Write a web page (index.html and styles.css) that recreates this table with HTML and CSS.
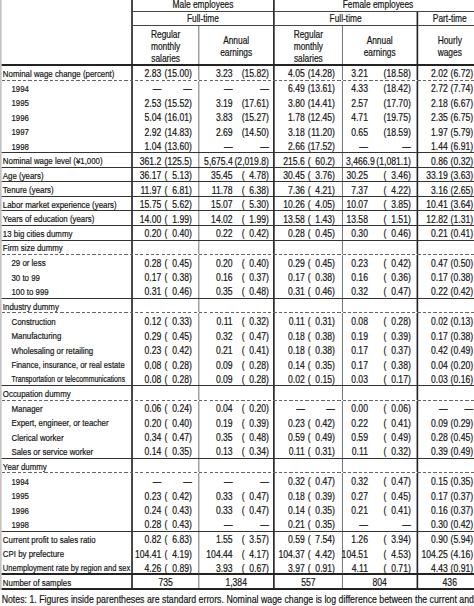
FILE: index.html
```html
<!DOCTYPE html>
<html lang="en">
<head>
<meta charset="utf-8">
<title>Descriptive statistics</title>
<link rel="stylesheet" href="styles.css">
</head>
<body>
<div class="frame">
<div class="sheet">
  <div class="tbl">
    <div class="hd">
      <div class="hlab"></div>
      <div class="h g1 b2">Male employees</div>
      <div class="h g2">Female employees</div>
      <div class="h g3 b2">Full-time</div>
      <div class="h g4 b2">Full-time</div>
      <div class="h g5">Part-time</div>
      <div class="h t b1">Regular<br>monthly<br>salaries</div>
      <div class="h t b2">Annual<br>earnings</div>
      <div class="h t b1">Regular<br>monthly<br>salaries</div>
      <div class="h t b2">Annual<br>earnings</div>
      <div class="h t">Hourly<br>wages</div>
    </div>

    <div class="r dl"><div class="lab">Nominal wage change (percent)</div>
      <div class="v c1"><span class="m">2.83</span><span class="s">15.00</span></div>
      <div class="v c2"><span class="m">3.23</span><span class="s">15.82</span></div>
      <div class="v c3"><span class="m">4.05</span><span class="s">14.28</span></div>
      <div class="v c4"><span class="m">3.21</span><span class="s">18.58</span></div>
      <div class="v c5"><span class="m">2.02</span><span class="s">6.72</span></div></div>
    <div class="r"><div class="lab sub">1994</div>
      <div class="v c1"><span class="m">—</span><span class="s x">—</span></div>
      <div class="v c2"><span class="m">—</span><span class="s x">—</span></div>
      <div class="v c3"><span class="m">6.49</span><span class="s">13.61</span></div>
      <div class="v c4"><span class="m">4.33</span><span class="s">18.42</span></div>
      <div class="v c5"><span class="m">2.72</span><span class="s">7.74</span></div></div>
    <div class="r"><div class="lab sub">1995</div>
      <div class="v c1"><span class="m">2.53</span><span class="s">15.52</span></div>
      <div class="v c2"><span class="m">3.19</span><span class="s">17.61</span></div>
      <div class="v c3"><span class="m">3.80</span><span class="s">14.41</span></div>
      <div class="v c4"><span class="m">2.57</span><span class="s">17.70</span></div>
      <div class="v c5"><span class="m">2.18</span><span class="s">6.67</span></div></div>
    <div class="r"><div class="lab sub">1996</div>
      <div class="v c1"><span class="m">5.04</span><span class="s">16.01</span></div>
      <div class="v c2"><span class="m">3.83</span><span class="s">15.27</span></div>
      <div class="v c3"><span class="m">1.78</span><span class="s">12.45</span></div>
      <div class="v c4"><span class="m">4.71</span><span class="s">19.75</span></div>
      <div class="v c5"><span class="m">2.35</span><span class="s">6.75</span></div></div>
    <div class="r"><div class="lab sub">1997</div>
      <div class="v c1"><span class="m">2.92</span><span class="s">14.83</span></div>
      <div class="v c2"><span class="m">2.69</span><span class="s">14.50</span></div>
      <div class="v c3"><span class="m">3.18</span><span class="s">11.20</span></div>
      <div class="v c4"><span class="m">0.65</span><span class="s">18.59</span></div>
      <div class="v c5"><span class="m">1.97</span><span class="s">5.79</span></div></div>
    <div class="r ln"><div class="lab sub">1998</div>
      <div class="v c1"><span class="m">1.04</span><span class="s">13.60</span></div>
      <div class="v c2"><span class="m">—</span><span class="s x">—</span></div>
      <div class="v c3"><span class="m">2.66</span><span class="s">17.52</span></div>
      <div class="v c4"><span class="m">—</span><span class="s x">—</span></div>
      <div class="v c5"><span class="m">1.44</span><span class="s">6.91</span></div></div>

    <div class="r ln"><div class="lab">Nominal wage level (¥1,000)</div>
      <div class="v c1"><span class="m">361.2</span><span class="s">125.5</span></div>
      <div class="v c2 tight"><span class="m">5,675.4</span><span class="s">2,019.8</span></div>
      <div class="v c3"><span class="m">215.6</span><span class="s">60.2</span></div>
      <div class="v c4 tight"><span class="m">3,466.9</span><span class="s">1,081.1</span></div>
      <div class="v c5"><span class="m">0.86</span><span class="s">0.32</span></div></div>
    <div class="r ln"><div class="lab">Age (years)</div>
      <div class="v c1"><span class="m">36.17</span><span class="s">5.13</span></div>
      <div class="v c2"><span class="m">35.45</span><span class="s">4.78</span></div>
      <div class="v c3"><span class="m">30.45</span><span class="s">3.76</span></div>
      <div class="v c4"><span class="m">30.25</span><span class="s">3.46</span></div>
      <div class="v c5"><span class="m">33.19</span><span class="s">3.63</span></div></div>
    <div class="r ln"><div class="lab">Tenure (years)</div>
      <div class="v c1"><span class="m">11.97</span><span class="s">6.81</span></div>
      <div class="v c2"><span class="m">11.78</span><span class="s">6.38</span></div>
      <div class="v c3"><span class="m">7.36</span><span class="s">4.21</span></div>
      <div class="v c4"><span class="m">7.37</span><span class="s">4.22</span></div>
      <div class="v c5"><span class="m">3.16</span><span class="s">2.65</span></div></div>
    <div class="r ln"><div class="lab">Labor market experience (years)</div>
      <div class="v c1"><span class="m">15.75</span><span class="s">5.62</span></div>
      <div class="v c2"><span class="m">15.07</span><span class="s">5.30</span></div>
      <div class="v c3"><span class="m">10.26</span><span class="s">4.05</span></div>
      <div class="v c4"><span class="m">10.07</span><span class="s">3.85</span></div>
      <div class="v c5"><span class="m">10.41</span><span class="s">3.64</span></div></div>
    <div class="r ln"><div class="lab">Years of education (years)</div>
      <div class="v c1"><span class="m">14.00</span><span class="s">1.99</span></div>
      <div class="v c2"><span class="m">14.02</span><span class="s">1.99</span></div>
      <div class="v c3"><span class="m">13.58</span><span class="s">1.43</span></div>
      <div class="v c4"><span class="m">13.58</span><span class="s">1.51</span></div>
      <div class="v c5"><span class="m">12.82</span><span class="s">1.31</span></div></div>
    <div class="r ln"><div class="lab">13 big cities dummy</div>
      <div class="v c1"><span class="m">0.20</span><span class="s">0.40</span></div>
      <div class="v c2"><span class="m">0.22</span><span class="s">0.42</span></div>
      <div class="v c3"><span class="m">0.28</span><span class="s">0.45</span></div>
      <div class="v c4"><span class="m">0.30</span><span class="s">0.46</span></div>
      <div class="v c5"><span class="m">0.21</span><span class="s">0.41</span></div></div>

    <div class="r dl"><div class="lab">Firm size dummy</div>
      <div class="v c1"></div><div class="v c2"></div><div class="v c3"></div><div class="v c4"></div><div class="v c5"></div></div>
    <div class="r"><div class="lab sub">29 or less</div>
      <div class="v c1"><span class="m">0.28</span><span class="s">0.45</span></div>
      <div class="v c2"><span class="m">0.20</span><span class="s">0.40</span></div>
      <div class="v c3"><span class="m">0.29</span><span class="s">0.45</span></div>
      <div class="v c4"><span class="m">0.23</span><span class="s">0.42</span></div>
      <div class="v c5"><span class="m">0.47</span><span class="s">0.50</span></div></div>
    <div class="r"><div class="lab sub">30 to 99</div>
      <div class="v c1"><span class="m">0.17</span><span class="s">0.38</span></div>
      <div class="v c2"><span class="m">0.16</span><span class="s">0.37</span></div>
      <div class="v c3"><span class="m">0.17</span><span class="s">0.38</span></div>
      <div class="v c4"><span class="m">0.16</span><span class="s">0.36</span></div>
      <div class="v c5"><span class="m">0.17</span><span class="s">0.38</span></div></div>
    <div class="r ln"><div class="lab sub">100 to 999</div>
      <div class="v c1"><span class="m">0.31</span><span class="s">0.46</span></div>
      <div class="v c2"><span class="m">0.35</span><span class="s">0.48</span></div>
      <div class="v c3"><span class="m">0.31</span><span class="s">0.46</span></div>
      <div class="v c4"><span class="m">0.32</span><span class="s">0.47</span></div>
      <div class="v c5"><span class="m">0.22</span><span class="s">0.42</span></div></div>

    <div class="r dl"><div class="lab">Industry dummy</div>
      <div class="v c1"></div><div class="v c2"></div><div class="v c3"></div><div class="v c4"></div><div class="v c5"></div></div>
    <div class="r"><div class="lab sub">Construction</div>
      <div class="v c1"><span class="m">0.12</span><span class="s">0.33</span></div>
      <div class="v c2"><span class="m">0.11</span><span class="s">0.32</span></div>
      <div class="v c3"><span class="m">0.11</span><span class="s">0.31</span></div>
      <div class="v c4"><span class="m">0.08</span><span class="s">0.28</span></div>
      <div class="v c5"><span class="m">0.02</span><span class="s">0.13</span></div></div>
    <div class="r"><div class="lab sub">Manufacturing</div>
      <div class="v c1"><span class="m">0.29</span><span class="s">0.45</span></div>
      <div class="v c2"><span class="m">0.32</span><span class="s">0.47</span></div>
      <div class="v c3"><span class="m">0.18</span><span class="s">0.38</span></div>
      <div class="v c4"><span class="m">0.19</span><span class="s">0.39</span></div>
      <div class="v c5"><span class="m">0.17</span><span class="s">0.38</span></div></div>
    <div class="r"><div class="lab sub">Wholesaling or retailing</div>
      <div class="v c1"><span class="m">0.23</span><span class="s">0.42</span></div>
      <div class="v c2"><span class="m">0.21</span><span class="s">0.41</span></div>
      <div class="v c3"><span class="m">0.18</span><span class="s">0.38</span></div>
      <div class="v c4"><span class="m">0.17</span><span class="s">0.37</span></div>
      <div class="v c5"><span class="m">0.42</span><span class="s">0.49</span></div></div>
    <div class="r"><div class="lab sub fin">Finance, insurance, or real estate</div>
      <div class="v c1"><span class="m">0.08</span><span class="s">0.28</span></div>
      <div class="v c2"><span class="m">0.09</span><span class="s">0.28</span></div>
      <div class="v c3"><span class="m">0.14</span><span class="s">0.35</span></div>
      <div class="v c4"><span class="m">0.17</span><span class="s">0.38</span></div>
      <div class="v c5"><span class="m">0.04</span><span class="s">0.20</span></div></div>
    <div class="r ln"><div class="lab sub small">Transportation or telecommunications</div>
      <div class="v c1"><span class="m">0.08</span><span class="s">0.28</span></div>
      <div class="v c2"><span class="m">0.09</span><span class="s">0.28</span></div>
      <div class="v c3"><span class="m">0.02</span><span class="s">0.15</span></div>
      <div class="v c4"><span class="m">0.03</span><span class="s">0.17</span></div>
      <div class="v c5"><span class="m">0.03</span><span class="s">0.16</span></div></div>

    <div class="r dl"><div class="lab">Occupation dummy</div>
      <div class="v c1"></div><div class="v c2"></div><div class="v c3"></div><div class="v c4"></div><div class="v c5"></div></div>
    <div class="r"><div class="lab sub">Manager</div>
      <div class="v c1"><span class="m">0.06</span><span class="s">0.24</span></div>
      <div class="v c2"><span class="m">0.04</span><span class="s">0.20</span></div>
      <div class="v c3"><span class="m">—</span><span class="s x">—</span></div>
      <div class="v c4"><span class="m">0.00</span><span class="s">0.06</span></div>
      <div class="v c5"><span class="m">—</span><span class="s x">—</span></div></div>
    <div class="r"><div class="lab sub">Expert, engineer, or teacher</div>
      <div class="v c1"><span class="m">0.20</span><span class="s">0.40</span></div>
      <div class="v c2"><span class="m">0.19</span><span class="s">0.39</span></div>
      <div class="v c3"><span class="m">0.23</span><span class="s">0.42</span></div>
      <div class="v c4"><span class="m">0.22</span><span class="s">0.41</span></div>
      <div class="v c5"><span class="m">0.09</span><span class="s">0.29</span></div></div>
    <div class="r"><div class="lab sub">Clerical worker</div>
      <div class="v c1"><span class="m">0.34</span><span class="s">0.47</span></div>
      <div class="v c2"><span class="m">0.35</span><span class="s">0.48</span></div>
      <div class="v c3"><span class="m">0.59</span><span class="s">0.49</span></div>
      <div class="v c4"><span class="m">0.59</span><span class="s">0.49</span></div>
      <div class="v c5"><span class="m">0.28</span><span class="s">0.45</span></div></div>
    <div class="r ln"><div class="lab sub">Sales or service worker</div>
      <div class="v c1"><span class="m">0.14</span><span class="s">0.35</span></div>
      <div class="v c2"><span class="m">0.13</span><span class="s">0.34</span></div>
      <div class="v c3"><span class="m">0.11</span><span class="s">0.31</span></div>
      <div class="v c4"><span class="m">0.11</span><span class="s">0.32</span></div>
      <div class="v c5"><span class="m">0.39</span><span class="s">0.49</span></div></div>

    <div class="r dl"><div class="lab">Year dummy</div>
      <div class="v c1"></div><div class="v c2"></div><div class="v c3"></div><div class="v c4"></div><div class="v c5"></div></div>
    <div class="r"><div class="lab sub">1994</div>
      <div class="v c1"><span class="m">—</span><span class="s x">—</span></div>
      <div class="v c2"><span class="m">—</span><span class="s x">—</span></div>
      <div class="v c3"><span class="m">0.32</span><span class="s">0.47</span></div>
      <div class="v c4"><span class="m">0.32</span><span class="s">0.47</span></div>
      <div class="v c5"><span class="m">0.15</span><span class="s">0.35</span></div></div>
    <div class="r"><div class="lab sub">1995</div>
      <div class="v c1"><span class="m">0.23</span><span class="s">0.42</span></div>
      <div class="v c2"><span class="m">0.33</span><span class="s">0.47</span></div>
      <div class="v c3"><span class="m">0.18</span><span class="s">0.39</span></div>
      <div class="v c4"><span class="m">0.27</span><span class="s">0.45</span></div>
      <div class="v c5"><span class="m">0.17</span><span class="s">0.37</span></div></div>
    <div class="r"><div class="lab sub">1996</div>
      <div class="v c1"><span class="m">0.24</span><span class="s">0.43</span></div>
      <div class="v c2"><span class="m">0.33</span><span class="s">0.47</span></div>
      <div class="v c3"><span class="m">0.14</span><span class="s">0.35</span></div>
      <div class="v c4"><span class="m">0.21</span><span class="s">0.41</span></div>
      <div class="v c5"><span class="m">0.16</span><span class="s">0.37</span></div></div>
    <div class="r ln"><div class="lab sub">1998</div>
      <div class="v c1"><span class="m">0.28</span><span class="s">0.43</span></div>
      <div class="v c2"><span class="m">—</span><span class="s x">—</span></div>
      <div class="v c3"><span class="m">0.21</span><span class="s">0.35</span></div>
      <div class="v c4"><span class="m">—</span><span class="s x">—</span></div>
      <div class="v c5"><span class="m">0.30</span><span class="s">0.42</span></div></div>

    <div class="r"><div class="lab">Current profit to sales ratio</div>
      <div class="v c1"><span class="m">0.82</span><span class="s">6.83</span></div>
      <div class="v c2"><span class="m">1.55</span><span class="s">3.57</span></div>
      <div class="v c3"><span class="m">0.59</span><span class="s">7.54</span></div>
      <div class="v c4"><span class="m">1.26</span><span class="s">3.94</span></div>
      <div class="v c5"><span class="m">0.90</span><span class="s">5.94</span></div></div>
    <div class="r"><div class="lab">CPI by prefecture</div>
      <div class="v c1"><span class="m">104.41</span><span class="s">4.19</span></div>
      <div class="v c2"><span class="m">104.44</span><span class="s">4.17</span></div>
      <div class="v c3"><span class="m">104.37</span><span class="s">4.42</span></div>
      <div class="v c4"><span class="m">104.51</span><span class="s">4.53</span></div>
      <div class="v c5"><span class="m">104.25</span><span class="s">4.16</span></div></div>
    <div class="r tk"><div class="lab unemp">Unemployment rate by region and sex</div>
      <div class="v c1"><span class="m">4.26</span><span class="s">0.89</span></div>
      <div class="v c2"><span class="m">3.93</span><span class="s">0.67</span></div>
      <div class="v c3"><span class="m">3.97</span><span class="s">0.91</span></div>
      <div class="v c4"><span class="m">4.11</span><span class="s">0.71</span></div>
      <div class="v c5"><span class="m">4.43</span><span class="s">0.91</span></div></div>
    <div class="r tk"><div class="lab">Number of samples</div>
      <div class="v c1 n">735</div>
      <div class="v c2 n">1,384</div>
      <div class="v c3 n">557</div>
      <div class="v c4 n">804</div>
      <div class="v c5 n">436</div></div>
  </div>
  <p class="notes">Notes: 1. Figures inside parentheses are standard errors. Nominal wage change is log difference between the current and</p>
</div>
</div>
</body>
</html>
```
FILE: styles.css
```css
html, body {
  margin: 0;
  padding: 0;
  background: #fff;
  overflow: hidden;
}
body {
  width: 474px;
  height: 606px;
  font-family: "Liberation Sans", Arial, sans-serif;
  color: #141414;
}
.frame {
  width: 474px;
  height: 606px;
  overflow: hidden;
}
/* The table is set in a narrow face: Liberation Sans drawn at 82% width,
   the proportions of Arial Narrow. All horizontal sizes below are in the
   un-narrowed space. */
.sheet {
  width: 587px;
  margin-top: -2px;
  transform: scaleX(0.82);
  transform-origin: 0 0;
  -webkit-text-stroke: 0.2px #141414;
}
.tbl {
  --cols: 160px 81px 92px 83px 92px 77px;
  border-left: 2px solid #c4c4c4;
}
.hd {
  display: grid;
  grid-template-columns: var(--cols);
  grid-template-rows: 14px 14px 38px;
  border-bottom: 2px solid #222;
  font-size: 10.2px;
}
.hd > div { box-sizing: border-box; }
.hlab {
  grid-column: 1;
  grid-row: 1 / 4;
  border-right: 2px solid #222;
}
.h {
  display: flex;
  align-items: center;
  justify-content: center;
  text-align: center;
  line-height: 12px;
}
.g1 { grid-column: 2 / 4; grid-row: 1; border-bottom: 1px solid #444; }
.g2 { grid-column: 4 / 7; grid-row: 1; border-bottom: 1px solid #444; }
.g3 { grid-column: 2 / 4; grid-row: 2; border-bottom: 1px solid #444; }
.g4 { grid-column: 4 / 6; grid-row: 2; border-bottom: 1px solid #444; }
.g5 { grid-column: 6; grid-row: 2; border-bottom: 1px solid #444; }
.t { grid-row: 3; padding-top: 3px; }
.b1 { border-right: 1px solid #555; }
.b2 { border-right: 2px solid #222; }

.r {
  display: grid;
  grid-template-columns: var(--cols);
  height: 14.55px;
  box-sizing: border-box;
}
.r > div { box-sizing: border-box; padding-top: 1px; }
.ln { border-bottom: 1px solid #333; }
.tk { border-bottom: 2px solid #222; }
.dl {
  padding-bottom: 1px;
  background-image: repeating-linear-gradient(to right, #666 0 4px, transparent 4px 6.5px);
  background-size: 100% 1px;
  background-position: left bottom;
  background-repeat: no-repeat;
}
.lab {
  display: flex;
  align-items: center;
  padding-left: 1.5px;
  white-space: nowrap;
  overflow: hidden;
  font-size: 9.6px;
  border-right: 2px solid #222;
}
.sub { padding-left: 12px; }
.fin { font-size: 9.3px; }
.small { font-size: 8.3px; }
.unemp { font-size: 9.2px; }

.v {
  display: flex;
  align-items: center;
  justify-content: flex-end;
  white-space: nowrap;
  font-size: 10.5px;
}
.m { margin-right: var(--g); }
.s {
  display: inline-flex;
  justify-content: flex-end;
  min-width: var(--w);
}
.s::before { content: "("; margin-right: auto; }
.s::after { content: ")"; }
.x::before, .x::after { content: none; }

.c1 { padding-right: 8px; --g: 4px; --w: 3.17em; border-right: 1px solid #555; }
.c2 { padding-right: 5px; --g: 11px; --w: 3.17em; border-right: 2px solid #222; }
.c3 { padding-right: 8.5px; --g: 3.5px; --w: 3.17em; border-right: 1px solid #555; }
.c4 { padding-right: 7px; --g: 19px; --w: 3.17em; border-right: 2px solid #222; }
.c5 { padding-right: 10px; --g: 3.5px; --w: 2.62em; }
.tight { --g: 2px; }
.n { justify-content: center; padding-right: 0; }

.notes {
  margin: 3px 0 0 0;
  width: 578px;
  padding-left: 2px;
  box-sizing: border-box;
  font-size: 10.7px;
  line-height: 12px;
  text-align: justify;
  text-align-last: justify;
}
```
